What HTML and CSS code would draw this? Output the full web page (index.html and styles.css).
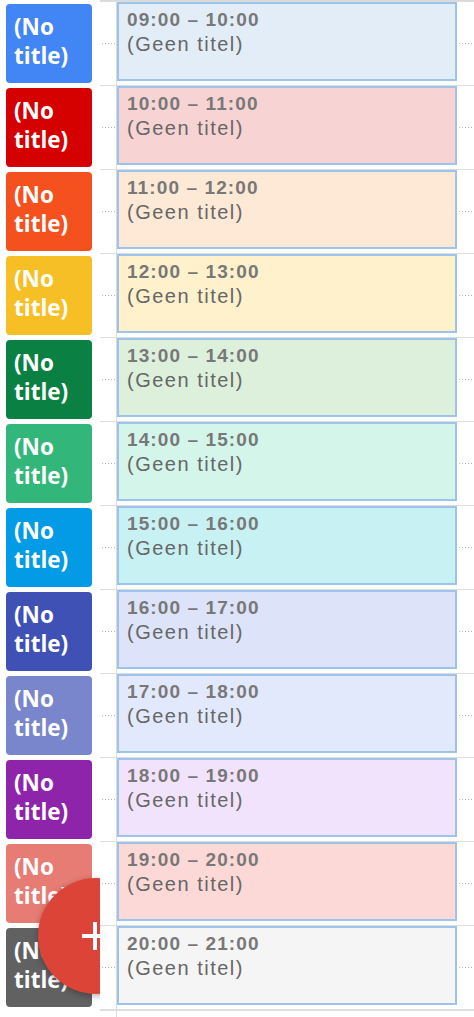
FILE: index.html
```
<!DOCTYPE html>
<html>
<head>
<meta charset="utf-8">
<link rel="stylesheet" href="styles.css">
</head>
<body>
<div class="page">
  <div class="rail">
    <div class="tile c1">(No title)</div>
    <div class="tile c2">(No title)</div>
    <div class="tile c3">(No title)</div>
    <div class="tile c4">(No title)</div>
    <div class="tile c5">(No title)</div>
    <div class="tile c6">(No title)</div>
    <div class="tile c7">(No title)</div>
    <div class="tile c8">(No title)</div>
    <div class="tile c9">(No title)</div>
    <div class="tile c10">(No title)</div>
    <div class="tile c11">(No title)</div>
    <div class="tile c12">(No title)</div>
    <div class="fab">
      <svg class="plus" width="116" height="116" viewBox="0 0 116 116">
        <rect x="44" y="56" width="28" height="4" fill="#fff"/>
        <rect x="55" y="44" width="4" height="28" fill="#fff"/>
      </svg>
    </div>
  </div>
  <div class="day">
    <div class="slot"><div class="event e1"><div class="time">09:00 – 10:00</div><div class="title">(Geen titel)</div></div></div>
    <div class="slot"><div class="event e2"><div class="time">10:00 – 11:00</div><div class="title">(Geen titel)</div></div></div>
    <div class="slot"><div class="event e3"><div class="time">11:00 – 12:00</div><div class="title">(Geen titel)</div></div></div>
    <div class="slot"><div class="event e4"><div class="time">12:00 – 13:00</div><div class="title">(Geen titel)</div></div></div>
    <div class="slot"><div class="event e5"><div class="time">13:00 – 14:00</div><div class="title">(Geen titel)</div></div></div>
    <div class="slot"><div class="event e6"><div class="time">14:00 – 15:00</div><div class="title">(Geen titel)</div></div></div>
    <div class="slot"><div class="event e7"><div class="time">15:00 – 16:00</div><div class="title">(Geen titel)</div></div></div>
    <div class="slot"><div class="event e8"><div class="time">16:00 – 17:00</div><div class="title">(Geen titel)</div></div></div>
    <div class="slot"><div class="event e9"><div class="time">17:00 – 18:00</div><div class="title">(Geen titel)</div></div></div>
    <div class="slot"><div class="event e10"><div class="time">18:00 – 19:00</div><div class="title">(Geen titel)</div></div></div>
    <div class="slot"><div class="event e11"><div class="time">19:00 – 20:00</div><div class="title">(Geen titel)</div></div></div>
    <div class="slot"><div class="event e12"><div class="time">20:00 – 21:00</div><div class="title">(Geen titel)</div></div></div>
  </div>
</div>
</body>
</html>
```
FILE: styles.css
```
html, body {
  margin: 0;
  padding: 0;
  background: #fff;
}

.page {
  display: flex;
  width: 474px;
  height: 1017px;
  overflow: hidden;
}

.rail {
  position: relative;
  width: 100px;
  flex: 0 0 100px;
  overflow: hidden;
  display: flex;
  flex-direction: column;
  gap: 5px;
  padding-top: 4px;
  box-sizing: border-box;
}

.tile {
  width: 86px;
  height: 79px;
  flex: 0 0 79px;
  margin-left: 6px;
  box-sizing: border-box;
  padding: 8px 4px 0 8px;
  border-radius: 4px;
  color: #fff;
  font-family: "Open Sans", "Liberation Sans", sans-serif;
  font-weight: 700;
  font-size: 22.5px;
  line-height: 29px;
}

.c1 { background: #4285f4; }
.c2 { background: #d50000; }
.c3 { background: #f4511e; }
.c4 { background: #f6bf26; }
.c5 { background: #0b8043; }
.c6 { background: #33b679; }
.c7 { background: #039be5; }
.c8 { background: #3f51b5; }
.c9 { background: #7986cb; }
.c10 { background: #8e24aa; }
.c11 { background: #e67c73; }
.c12 { background: #616161; }

.fab {
  position: absolute;
  left: 38px;
  top: 878px;
  width: 116px;
  height: 116px;
  border-radius: 50%;
  background: #db4437;
  box-shadow: 0 2px 6px rgba(0, 0, 0, 0.3);
}

.plus {
  display: block;
}

.day {
  flex: 1;
  border-top: 1px solid #d9d9d9;
  background: linear-gradient(#dcdcdc, #dcdcdc) 16px 0 / 1px 100% no-repeat;
}

.slot {
  height: 84px;
  box-sizing: border-box;
  border-top: 1px solid #dedede;
  padding-left: 17px;
  background: linear-gradient(to right, #b8b8b8 1px, transparent 1px) 2px 41px / 3px 1px repeat-x;
}

.slot:last-child {
  border-bottom: 2px solid #dedede;
  height: 86px;
}

.event {
  width: 340px;
  height: 79px;
  box-sizing: border-box;
  border: 2px solid #9ec3ea;
  padding: 4px 8px;
  font-family: "Liberation Sans", Arial, sans-serif;
}

.time {
  font-weight: 700;
  font-size: 19px;
  line-height: 24px;
  color: #787878;
  letter-spacing: 1.1px;
}

.title {
  color: #666;
  font-size: 20px;
  line-height: 25px;
  letter-spacing: 1.5px;
}

.e1 { background: #e2edf8; }
.e2 { background: #f7d3d4; }
.e3 { background: #fde9d6; }
.e4 { background: #fef1cc; }
.e5 { background: #dcf0dc; }
.e6 { background: #d4f5ea; }
.e7 { background: #c8f1f3; }
.e8 { background: #dde3f9; }
.e9 { background: #e3e9fc; }
.e10 { background: #f2e3fc; }
.e11 { background: #fcd9d6; }
.e12 { background: #f5f5f5; }
```
